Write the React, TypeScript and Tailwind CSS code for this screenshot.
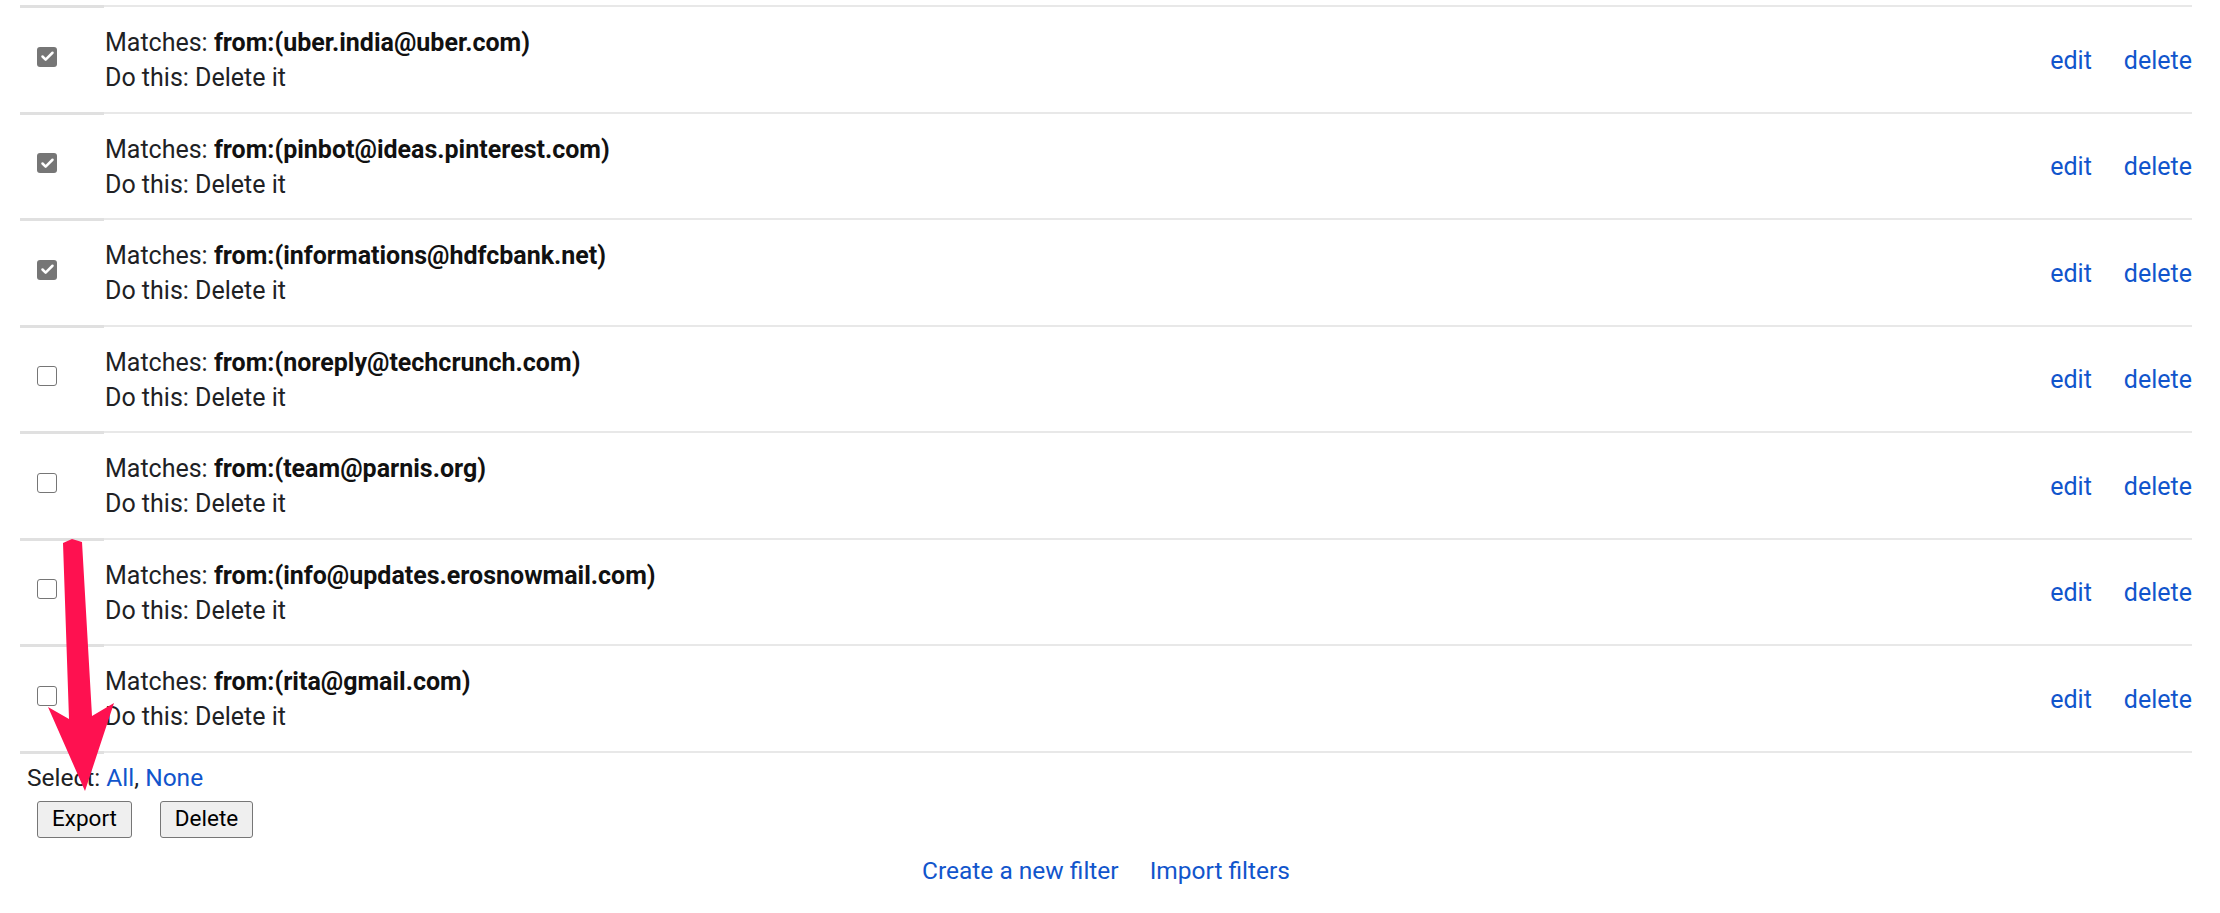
import {Check} from 'lucide-react';

const filters = [
  {from: 'uber.india@uber.com', checked: true},
  {from: 'pinbot@ideas.pinterest.com', checked: true},
  {from: 'informations@hdfcbank.net', checked: true},
  {from: 'noreply@techcrunch.com', checked: false},
  {from: 'team@parnis.org', checked: false},
  {from: 'info@updates.erosnowmail.com', checked: false},
  {from: 'rita@gmail.com', checked: false},
];

function Box({checked}: {checked: boolean}) {
  if (checked) {
    return (
      <span className="flex h-[20px] w-[20px] items-center justify-center rounded-[3px] bg-[#767676]">
        <Check className="h-[15px] w-[15px] text-white" strokeWidth={4} />
      </span>
    );
  }
  return (
    <span className="block h-[20px] w-[20px] rounded-[3px] border-[1.5px] border-[#767676] bg-white" />
  );
}

export default function App() {
  return (
    <div
      className="relative min-h-screen bg-white pt-[5px] text-[25px] text-[#202124]"
      style={{fontFamily: 'Roboto, "Liberation Sans", sans-serif'}}
    >
      <div className="ml-[20px] mr-[28px]">
        {filters.map((f) => (
          <div key={f.from} className="flex h-[106.5px]">
            <div className="flex w-[84px] items-center border-t-[3px] border-[#e0e0e0] pl-[17px]">
              <div className="-mt-[6px]">
                <Box checked={f.checked} />
              </div>
            </div>
            <div className="flex flex-1 items-center justify-between border-t-2 border-[#e8e8e8] pl-[1px]">
              <div className="pt-[2px] leading-[35px]">
                <div>
                  Matches: <span className="font-bold text-[#111]">from:({f.from})</span>
                </div>
                <div>Do this: Delete it</div>
              </div>
              <div className="flex gap-[32px] pt-[2px] text-[#1155cc]">
                <a>edit</a>
                <a>delete</a>
              </div>
            </div>
          </div>
        ))}
        <div className="flex">
          <div className="w-[84px] border-t-[3px] border-[#e0e0e0]" />
          <div className="flex-1 border-t-2 border-[#e8e8e8]" />
        </div>

        <div className="mt-[6px] pl-[7px] text-[24.5px] leading-[35px]">
          Select: <a className="text-[#1155cc]">All</a>,{' '}
          <a className="text-[#1155cc]">None</a>
        </div>

        <div className="mt-[6px] flex gap-[28px] pl-[17px]">
          <button className="h-[37px] w-[95px] rounded-[3px] border border-[#767676] bg-[#efefef] text-[22.5px] text-black">
            Export
          </button>
          <button className="h-[37px] w-[93px] rounded-[3px] border border-[#767676] bg-[#efefef] text-[22.5px] text-black">
            Delete
          </button>
        </div>

        <div className="mt-[15px] flex justify-center gap-[31px] text-[24.5px] leading-[35px] text-[#1155cc]">
          <a>Create a new filter</a>
          <a>Import filters</a>
        </div>
      </div>

      <svg
        className="pointer-events-none absolute left-0 top-0"
        width="140"
        height="800"
        viewBox="0 0 140 800"
      >
        <polygon
          points="63,543 72,539 82,542 92,716 114,703 85,791 48,707 69,719"
          fill="#fe1150"
        />
      </svg>
    </div>
  );
}
